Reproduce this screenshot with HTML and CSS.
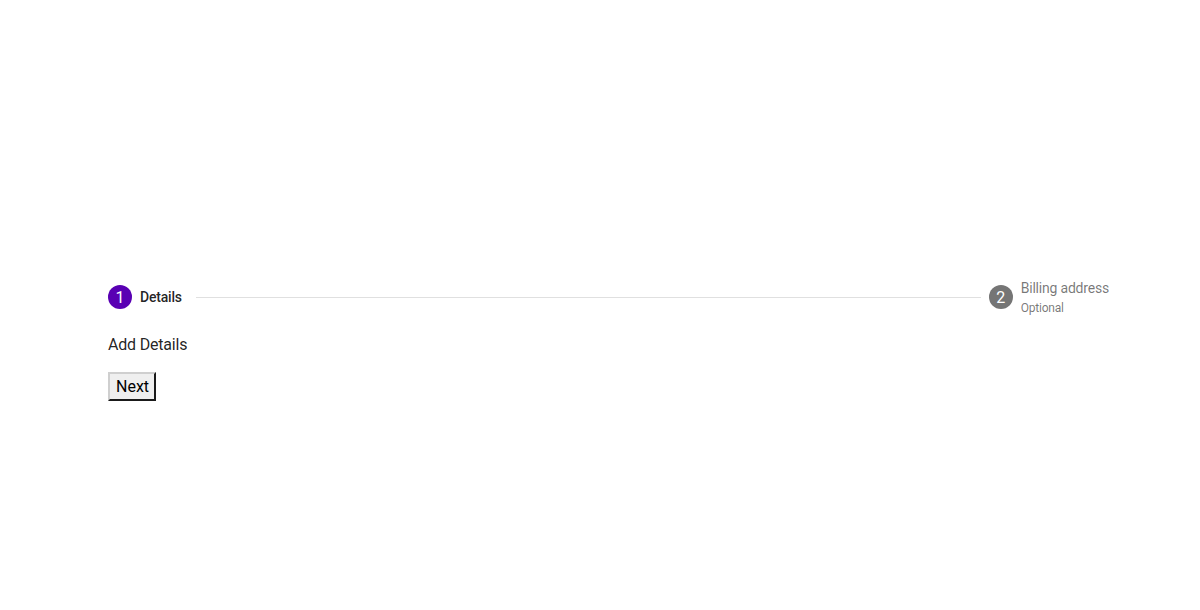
FILE: index.html
```html
<!DOCTYPE html>
<html lang="en">
<head>
  <meta charset="UTF-8">
  <meta name="viewport" content="width=device-width, initial-scale=1.0">
  <title>Stepper</title>
  <link rel="stylesheet" href="styles.css">
</head>
<body>
  <div class="stepper">
    <!-- Cabecera de pasos -->
    <div class="stepper-header">
      <div class="step step-active">
        <span class="step-icon">1</span>
        <div class="step-label">
          <span class="step-title">Details</span>
        </div>
      </div>
      <div class="step-line"></div>
      <div class="step">
        <span class="step-icon">2</span>
        <div class="step-label">
          <span class="step-title">Billing address</span>
          <span class="step-optional">Optional</span>
        </div>
      </div>
    </div>

    <!-- Contenido del paso -->
    <div class="step-content">
      <p class="step-text">Add Details</p>
      <button class="step-next">Next</button>
    </div>
  </div>
</body>
</html>
```

FILE: styles.css
```css
body {
  margin: 0;
  font-family: Roboto, "Helvetica Neue", sans-serif;
  color: rgba(0, 0, 0, 0.87);
  background: #fff;
}

.stepper {
  padding: 261px 67px 0 84px;
}

/* Cabecera */
.stepper-header {
  display: flex;
  align-items: center;
  height: 72px;
}

.step {
  display: flex;
  align-items: center;
  padding: 0 24px;
  height: 72px;
}

.step-icon {
  width: 24px;
  height: 24px;
  border-radius: 50%;
  background: #757575;
  color: #fff;
  font-size: 16px;
  display: flex;
  align-items: center;
  justify-content: center;
}

.step-active .step-icon {
  background: #5900b3;
}

.step-label {
  display: flex;
  flex-direction: column;
  padding-left: 8px;
  font-size: 14px;
  letter-spacing: -0.2px;
  color: rgba(0, 0, 0, 0.54);
}

.step-active .step-label {
  color: rgba(0, 0, 0, 0.87);
  font-weight: 500;
}

.step-optional {
  font-size: 12px;
  margin-top: 5px;
}

.step-line {
  flex: 1;
  border-top: 1px solid rgba(0, 0, 0, 0.12);
  margin: 0 -16px 0 -10px;
}

/* Contenido */
.step-content {
  padding: 0 24px 24px;
}

.step-text {
  margin: 2px 0 0;
  font-size: 16px;
  line-height: 20px;
  letter-spacing: -0.2px;
}

.step-next {
  margin-top: 17px;
  font-family: Roboto, sans-serif;
  font-size: 16px;
  color: #000;
  padding: 3px 5px 3px 6px;
  background: #efefef;
  border: 2px solid;
  border-color: #cfcfcf #1a1a1a #1a1a1a #cfcfcf;
  border-radius: 0;
}
```
